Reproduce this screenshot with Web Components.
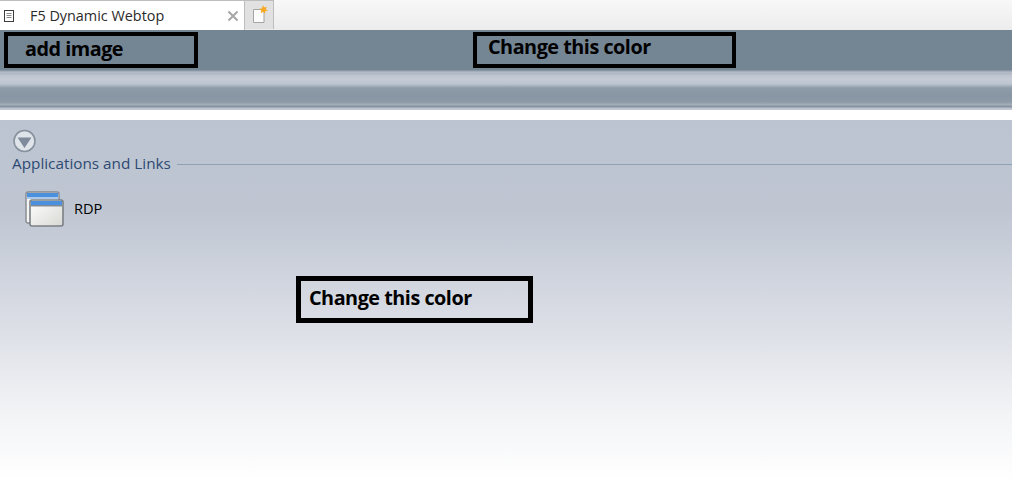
<!DOCTYPE html>
<html>
<head>
<meta charset="utf-8">
<title>F5 Dynamic Webtop</title>
<style>
    html, body { margin: 0; height: 100%; overflow: hidden; background: #fff; }
    body { font-family: "Open Sans", "Liberation Sans", sans-serif; }
    webtop-page { height: 482px; }
</style>
</head>
<body>
<webtop-page>
    <browser-tabs slot="tabs" title-text="F5 Dynamic Webtop"></browser-tabs>
    <webtop-header slot="header"></webtop-header>
    <webtop-section slot="content" heading="Applications and Links">
        <app-link label="RDP"></app-link>
    </webtop-section>
    <note-box slot="notes" style="left:4px;top:32px;width:194px;height:36px;--pad:17px;--lift:-2px" text="add image"></note-box>
    <note-box slot="notes" style="left:473px;top:32px;width:263px;height:36px;--pad:11px;--lift:-4px" text="Change this color"></note-box>
    <note-box slot="notes" style="left:296px;top:276px;width:237px;height:47px;--pad:8px;--lift:-2px;--border:5px" text="Change this color"></note-box>
</webtop-page>

<script>
class WebtopPage extends HTMLElement {
    constructor() {
        super();
        this.attachShadow({ mode: 'open' });
        this.shadowRoot.innerHTML = `
        <style>
            :host { display: flex; flex-direction: column; position: relative; width: 100%; overflow: hidden; }
            .gap { height: 10px; background: #fff; flex: none; }
            .content { flex: 1; min-height: 0; display: flex; flex-direction: column; }
        </style>
        <slot name="tabs"></slot>
        <slot name="header"></slot>
        <div class="gap"></div>
        <div class="content"><slot name="content"></slot></div>
        <slot name="notes"></slot>
        `;
    }
}

class BrowserTabs extends HTMLElement {
    constructor() {
        super();
        this.attachShadow({ mode: 'open' });
    }

    connectedCallback() {
        this.shadowRoot.innerHTML = `
        <style>
            :host { display: flex; height: 30px; flex: none; background: linear-gradient(#f8f8f8, #ececec); }
            .tab {
                width: 245px; box-sizing: border-box; height: 30px; background: #fff;
                border-top: 1px solid #bdbdbd; border-right: 1px solid #bdbdbd;
                display: flex; align-items: center; padding-left: 4px;
            }
            .title { margin-left: 16px; font: 14.4px "Open Sans", sans-serif; color: #2b2b2b; flex: 1; white-space: nowrap; }
            .close { margin-right: 5px; }
            .new {
                width: 29px; box-sizing: border-box; height: 29px; background: #e1e1e1;
                border-top: 1px solid #bdbdbd; border-right: 1px solid #bdbdbd;
                display: flex; padding: 3px 0 0 6px;
            }
            svg { display: block; flex: none; }
        </style>
        <div class="tab">
            <svg width="10" height="12" viewBox="0 0 10 12">
                <rect x=".5" y=".5" width="9" height="11" fill="#fff" stroke="#3c3c3c"/>
                <path d="M2.5 3.5h5M2.5 5.5h5M2.5 7.5h5" stroke="#8a8a8a"/>
            </svg>
            <span class="title">${this.getAttribute('title-text')}</span>
            <svg class="close" width="12" height="12" viewBox="0 0 12 12">
                <path d="M1.5 1.5l9 9M10.5 1.5l-9 9" stroke="#a9a9a9" stroke-width="2.2"/>
            </svg>
        </div>
        <div class="new">
            <svg width="20" height="21" viewBox="0 0 20 21">
                <path d="M2.5 5.5h8l2.5 2.5v10.500h-10.500z" fill="#fbfbfb" stroke="#a4a4a4"/>
                <path d="M12 1l1 2.500 2.700-.8-.9 2.500 2.200 1.500-2.700.3-.3 2.700-2-1.900-2.200 1.400.4-2.700-2-1.700 2.700-.3z" fill="#f7a823"/>
            </svg>
        </div>
        `;
    }
}

class WebtopHeader extends HTMLElement {
    constructor() {
        super();
        this.attachShadow({ mode: 'open' });
        this.shadowRoot.innerHTML = `
        <style>
            :host { display: block; flex: none; }
            .top { height: 40px; background: #748594; }
            .bar {
                height: 40px;
                background: linear-gradient(#8a98a6 0, #8a98a6 1px, #bdc4cf 2px, #aab3bf 3px, #bcc3cf 5px, #c5ccd6 9px, #bcc4cf 14px,
                    #8e9ba9 18px, #8895a3 26px, #8e9aa7 32px, #a8b1bc 35px, #8592a0 36px, #8592a0 37px, #bcc3cd 38px, #c4cad3 40px);
            }
        </style>
        <div class="top"></div>
        <div class="bar"></div>
        `;
    }
}

class WebtopSection extends HTMLElement {
    constructor() {
        super();
        this.attachShadow({ mode: 'open' });
    }

    connectedCallback() {
        this.shadowRoot.innerHTML = `
        <style>
            :host {
                display: block; flex: 1; box-sizing: border-box; padding: 9px 0 0 12px;
                background: linear-gradient(#bcc4d1 0, #bfc6d2 90px, #dadde5 200px, #f4f5f7 300px, #fff 362px);
            }
            svg { display: block; }
            .head { display: flex; align-items: center; gap: 6px; margin-top: -1px; }
            .name { font: 15.3px "Open Sans", sans-serif; color: #2d4a73; white-space: nowrap; line-height: 22px; }
            .rule { flex: 1; height: 1px; background: #8ea2b6; margin-top: 3px; }
            .items { padding: 17px 0 0 13px; }
        </style>
        <svg width="25" height="24" viewBox="0 0 25 24">
            <circle cx="12.5" cy="12" r="10.500" fill="#dfe3ea" stroke="#87919d" stroke-width="1.6"/>
            <path d="M5.500 8.500h14l-7 10.500z" fill="#7f8b9a"/>
        </svg>
        <div class="head"><span class="name">${this.getAttribute('heading')}</span><span class="rule"></span></div>
        <div class="items"><slot></slot></div>
        `;
    }
}

class AppLink extends HTMLElement {
    constructor() {
        super();
        this.attachShadow({ mode: 'open' });
    }

    connectedCallback() {
        this.shadowRoot.innerHTML = `
        <style>
            :host { display: flex; align-items: center; gap: 10px; }
            .label { font: 14.6px "Open Sans", sans-serif; color: #000; margin-top: -3px; }
            svg { display: block; flex: none; }
        </style>
        <svg width="39" height="37" viewBox="0 0 39 37">
            <defs>
                <linearGradient id="page" x1="0" y1="0" x2="1" y2="1">
                    <stop offset="0" stop-color="#fff"/><stop offset="1" stop-color="#d8d8d4"/>
                </linearGradient>
            </defs>
            <rect x="1" y="1" width="33" height="31" rx="2" fill="#f4f4f2" stroke="#85898f" stroke-width="1.400"/>
            <rect x="2" y="2" width="31" height="4" fill="#4a90dc"/>
            <rect x="2" y="6" width="31" height="2" fill="#a9c9ea"/>
            <rect x="5" y="9" width="33" height="26" rx="2" fill="url(#page)" stroke="#7c8086" stroke-width="1.6"/>
            <rect x="6" y="10" width="31" height="4" fill="#4a90dc"/>
            <rect x="6" y="14" width="31" height="1.500" fill="#7f8b97"/>
        </svg>
        <span class="label">${this.getAttribute('label')}</span>
        `;
    }
}

// annotation boxes drawn over the screenshot
class NoteBox extends HTMLElement {
    constructor() {
        super();
        this.attachShadow({ mode: 'open' });
    }

    connectedCallback() {
        this.shadowRoot.innerHTML = `
        <style>
            :host {
                display: flex; align-items: center; position: absolute; box-sizing: border-box;
                border: var(--border, 4px) solid #000; padding-left: var(--pad, 10px);
            }
            span {
                font: 700 19.8px "Open Sans", sans-serif; letter-spacing: -.48px; color: #000; white-space: nowrap;
                position: relative; top: var(--lift, 0);
            }
        </style>
        <span>${this.getAttribute('text')}</span>
        `;
    }
}

customElements.define('webtop-page', WebtopPage);
customElements.define('browser-tabs', BrowserTabs);
customElements.define('webtop-header', WebtopHeader);
customElements.define('webtop-section', WebtopSection);
customElements.define('app-link', AppLink);
customElements.define('note-box', NoteBox);
</script>
</body>
</html>
